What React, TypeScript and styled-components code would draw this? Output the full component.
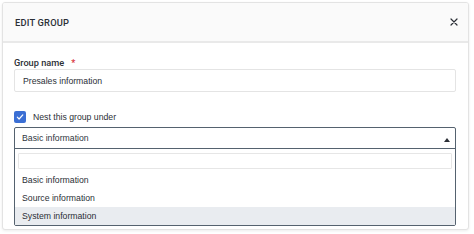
import styled, { createGlobalStyle } from 'styled-components';

const GlobalStyle = createGlobalStyle`
  html, body {
    margin: 0;
    padding: 0;
    background: #ffffff;
  }
  body {
    font-family: "Liberation Sans", Arial, sans-serif;
    color: #2f3640;
  }
  * { box-sizing: border-box; }
`

const Page = styled.div`
  width: 474px;
  height: 234px;
  padding: 2px 5px 4px 2px;
`

const Modal = styled.div`
  height: 100%;
  background: #ffffff;
  border: 1px solid #e3e3e3;
  border-radius: 3px;
  box-shadow: 0 1px 3px rgba(0, 0, 0, 0.08);
  display: flex;
  flex-direction: column;
  overflow: hidden;
`

const Header = styled.div`
  height: 40px;
  flex-shrink: 0;
  background: #fafafa;
  border-bottom: 2px solid #e9e9e9;
  display: flex;
  align-items: center;
  justify-content: space-between;
  padding: 0 6px 0 12px;
`

const Title = styled.h2`
  margin: 0;
  font-family: Roboto, "Liberation Sans", sans-serif;
  font-size: 9.3px;
  font-weight: 500;
  letter-spacing: 0.2px;
  color: #2b2f36;
`

const CloseButton = styled.button`
  width: 16px;
  height: 16px;
  border: none;
  background: transparent;
  padding: 0;
  display: flex;
  align-items: center;
  justify-content: center;
  color: #2b2f36;
`

const Body = styled.div`
  padding: 14px 12px 6px 11px;
  display: flex;
  flex-direction: column;
`

const Label = styled.label`
  font-family: Roboto, "Liberation Sans", sans-serif;
  font-size: 9.2px;
  font-weight: 500;
  color: #2b2f36;
  line-height: 11px;
  margin-bottom: 1px;
  display: flex;
`

const Required = styled.span`
  color: #d9363e;
  margin-left: 7px;
`

const TextInput = styled.div`
  height: 23px;
  border: 1px solid #e4e4e4;
  border-radius: 2px;
  display: flex;
  align-items: center;
  padding-left: 8px;
  font-size: 8.7px;
  color: #2b2f36;
`

const CheckRow = styled.div`
  margin-top: 19px;
  height: 12px;
  display: flex;
  align-items: center;
  gap: 7px;
  font-size: 8.7px;
  color: #2b2f36;
`

const Checkbox = styled.span`
  width: 12px;
  height: 12px;
  border-radius: 2px;
  background: #3b6fd4;
  display: flex;
  align-items: center;
  justify-content: center;
`

const Select = styled.div`
  margin-top: 4px;
  border: 1px solid #55626f;
  border-radius: 2px;
  display: flex;
  flex-direction: column;
`

const SelectValue = styled.div`
  height: 21px;
  display: flex;
  align-items: center;
  justify-content: space-between;
  padding: 0 5px 0 7px;
  font-size: 8.7px;
  border-bottom: 1px solid #55626f;
`

const Caret = styled.span`
  width: 0;
  height: 0;
  border-left: 3px solid transparent;
  border-right: 3px solid transparent;
  border-bottom: 4px solid #2b2f36;
  margin-top: 3px;
`

const Panel = styled.div`
  display: flex;
  flex-direction: column;
  padding-top: 4px;
`

const Search = styled.div`
  height: 16px;
  margin: 0 3px 2px 3px;
  border: 1px solid #e6e6e6;
  border-radius: 1px;
`

const Option = styled.div<{ $active?: boolean }>`
  height: 18px;
  display: flex;
  align-items: center;
  padding-left: 7px;
  font-size: 8.7px;
  color: #2b2f36;
  background: ${p => (p.$active ? '#e9ecf0' : 'transparent')};
`

const options = ['Basic information', 'Source information', 'System information'];

export default function App() {
  return (
    <>
      <GlobalStyle />
      <Page>
        <Modal>
          <Header>
            <Title>EDIT GROUP</Title>
            <CloseButton aria-label="Close">
              <svg width="8" height="8" viewBox="0 0 8 8">
                <path d="M1 1L7 7M7 1L1 7" stroke="currentColor" strokeWidth="1.2" strokeLinecap="round" />
              </svg>
            </CloseButton>
          </Header>
          <Body>
            <Label>
              Group name<Required>*</Required>
            </Label>
            <TextInput>Presales information</TextInput>
            <CheckRow>
              <Checkbox>
                <svg width="8" height="8" viewBox="0 0 8 8">
                  <path d="M1.3 4.2L3.1 6L6.8 1.9" stroke="#fff" strokeWidth="1.2" fill="none" strokeLinecap="round" strokeLinejoin="round" />
                </svg>
              </Checkbox>
              Nest this group under
            </CheckRow>
            <Select>
              <SelectValue>
                Basic information
                <Caret />
              </SelectValue>
              <Panel>
                <Search />
                {options.map((o, i) => (
                  <Option key={o} $active={i === options.length - 1}>{o}</Option>
                ))}
              </Panel>
            </Select>
          </Body>
        </Modal>
      </Page>
    </>
  );
}
